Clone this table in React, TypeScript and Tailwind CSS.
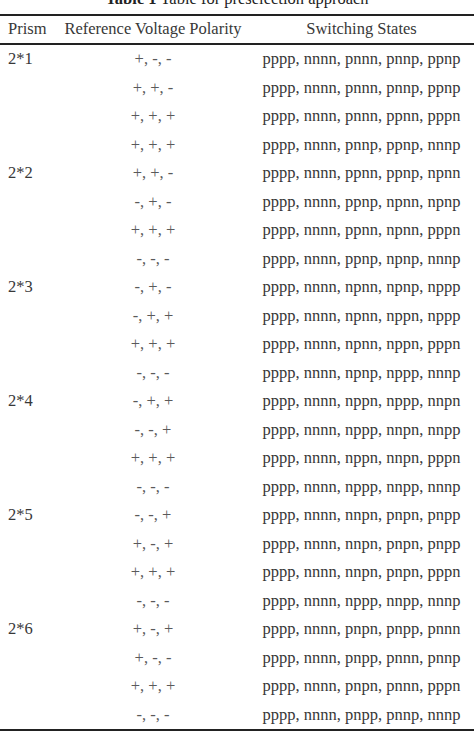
const groups = [
  {
    prism: "2*1",
    rows: [
      ["+, -, -", "pppp, nnnn, pnnn, pnnp, ppnp"],
      ["+, +, -", "pppp, nnnn, pnnn, pnnp, ppnp"],
      ["+, +, +", "pppp, nnnn, pnnn, ppnn, pppn"],
      ["+, +, +", "pppp, nnnn, pnnp, ppnp, nnnp"],
    ],
  },
  {
    prism: "2*2",
    rows: [
      ["+, +, -", "pppp, nnnn, ppnn, ppnp, npnn"],
      ["-, +, -", "pppp, nnnn, ppnp, npnn, npnp"],
      ["+, +, +", "pppp, nnnn, ppnn, npnn, pppn"],
      ["-, -, -", "pppp, nnnn, ppnp, npnp, nnnp"],
    ],
  },
  {
    prism: "2*3",
    rows: [
      ["-, +, -", "pppp, nnnn, npnn, npnp, nppp"],
      ["-, +, +", "pppp, nnnn, npnn, nppn, nppp"],
      ["+, +, +", "pppp, nnnn, npnn, nppn, pppn"],
      ["-, -, -", "pppp, nnnn, npnp, nppp, nnnp"],
    ],
  },
  {
    prism: "2*4",
    rows: [
      ["-, +, +", "pppp, nnnn, nppn, nppp, nnpn"],
      ["-, -, +", "pppp, nnnn, nppp, nnpn, nnpp"],
      ["+, +, +", "pppp, nnnn, nppn, nnpn, pppn"],
      ["-, -, -", "pppp, nnnn, nppp, nnpp, nnnp"],
    ],
  },
  {
    prism: "2*5",
    rows: [
      ["-, -, +", "pppp, nnnn, nnpn, pnpn, pnpp"],
      ["+, -, +", "pppp, nnnn, nnpn, pnpn, pnpp"],
      ["+, +, +", "pppp, nnnn, nnpn, pnpn, pppn"],
      ["-, -, -", "pppp, nnnn, nppp, nnpp, nnnp"],
    ],
  },
  {
    prism: "2*6",
    rows: [
      ["+, -, +", "pppp, nnnn, pnpn, pnpp, pnnn"],
      ["+, -, -", "pppp, nnnn, pnpp, pnnn, pnnp"],
      ["+, +, +", "pppp, nnnn, pnpn, pnnn, pppn"],
      ["-, -, -", "pppp, nnnn, pnpp, pnnp, nnnp"],
    ],
  },
]

export default function App() {
  return (
    <div className="w-[474px] bg-white text-[16.5px] text-[#383838] font-['Liberation_Serif','Times_New_Roman',serif]">
      {/* caption, cut off at the top of the crop */}
      <div className="h-[14px] overflow-hidden">
        <p className="-mt-[11px] text-center leading-[20px] text-[#222]">
          <span className="font-bold">Table 1</span> Table for preselection approach
        </p>
      </div>

      <div className="border-t-2 border-b-2 border-[#222] grid grid-cols-[57px_192px_1fr] h-[31px] items-center leading-none">
        <div className="pl-[8px]">Prism</div>
        <div className="text-center">Reference Voltage Polarity</div>
        <div className="text-center">Switching States</div>
      </div>

      <div className="border-b-[3px] border-[#222]">
        {groups.map((g) =>
          g.rows.map(([pol, states], i) => (
            <div key={g.prism + i} className="grid grid-cols-[57px_192px_1fr] h-[28.5px] items-center leading-none">
              <div className="pl-[8px]">{i === 0 ? g.prism : ""}</div>
              <div className="text-center text-[#5a5a5a]">{pol}</div>
              <div className="text-center">{states}</div>
            </div>
          ))
        )}
      </div>
    </div>
  )
}
